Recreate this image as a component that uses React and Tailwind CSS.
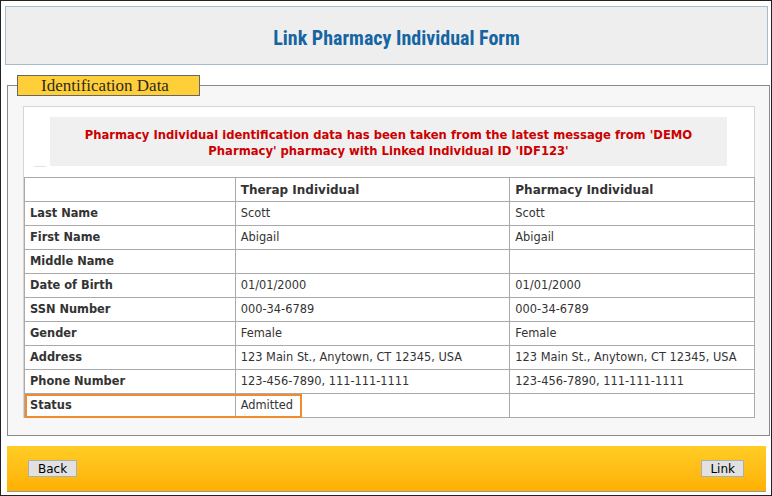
import React from "react";

const rows = [
  ["Last Name", "Scott", "Scott"],
  ["First Name", "Abigail", "Abigail"],
  ["Middle Name", "", ""],
  ["Date of Birth", "01/01/2000", "01/01/2000"],
  ["SSN Number", "000-34-6789", "000-34-6789"],
  ["Gender", "Female", "Female"],
  ["Address", "123 Main St., Anytown, CT 12345, USA", "123 Main St., Anytown, CT 12345, USA"],
  ["Phone Number", "123-456-7890, 111-111-1111", "123-456-7890, 111-111-1111"],
];

export default function App() {
  const verdana = { fontFamily: '"DejaVu Sans", Verdana, sans-serif' };
  const cell = "border border-[#aaaaaa] px-[5px]";
  return (
    <div className="w-[772px] h-[496px] border border-[#222] bg-white relative overflow-hidden" style={verdana}>
      <div className="ml-[4px] mt-[5px] w-[763px] h-[59px] bg-[#eeeeee] border border-[#a6bccd] flex items-center justify-center pl-[20px]">
        <span
          className="text-[#1565a3] text-[20px] font-bold pt-[4px]"
          style={{ fontFamily: '"Liberation Sans Narrow", "Roboto Condensed", Roboto, sans-serif', fontStretch: "condensed" }}
        >
          Link Pharmacy Individual Form
        </span>
      </div>

      <div className="relative ml-[6px] mt-[20px] w-[763px] h-[351px] border border-[#8a8a8a] bg-[#f7f7f7]">
        <div
          className="absolute left-[9px] top-[-11px] w-[183px] h-[21px] bg-[#ffcf3a] border border-[#666] pl-[23px] text-[17px] leading-[19px] text-[#2f2a1c]"
          style={{ fontFamily: '"Liberation Serif", "Times New Roman", serif' }}
        >
          Identification Data
        </div>
        <div className="relative ml-[15px] mt-[20px] w-[732px] border border-[#d6d6d6] border-b-0 bg-white">
          <div className="ml-[26px] mt-[10px] w-[677px] h-[49px] pt-[2px] bg-[#f0f0f0] flex flex-col items-center justify-center text-[#cc0000] font-bold text-[11.6px] leading-[16px]">
            <div>Pharmacy Individual identification data has been taken from the latest message from 'DEMO</div>
            <div>Pharmacy' pharmacy with Linked Individual ID 'IDF123'</div>
          </div>
          <div className="ml-[10px] w-[12px] h-[1px] bg-[#e4e4e4]" />
          <table className="mt-[10px] w-[731px] border-collapse text-[11.4px] text-[#333]">
            <colgroup>
              <col className="w-[211px]" />
              <col className="w-[275px]" />
              <col className="w-[245px]" />
            </colgroup>
            <tbody>
              <tr className="h-[24px]">
                <td className={cell}></td>
                <td className={cell + " font-bold text-[12px]"}>Therap Individual</td>
                <td className={cell + " font-bold text-[12px]"}>Pharmacy Individual</td>
              </tr>
              {rows.map((r) => (
                <tr key={r[0]} className="h-[24px]">
                  <td className={cell + " font-bold"}>{r[0]}</td>
                  <td className={cell}>{r[1]}</td>
                  <td className={cell}>{r[2]}</td>
                </tr>
              ))}
              <tr className="h-[24px]">
                <td className={cell + " font-bold"}>Status</td>
                <td className={cell}>Admitted</td>
                <td className={cell}></td>
              </tr>
            </tbody>
          </table>
          <div className="absolute left-[1px] bottom-[0px] w-[277px] h-[24px] border-2 border-[#f28a2e] pointer-events-none" />
        </div>
      </div>

      <div className="ml-[6px] mt-[10px] w-[759px] h-[46px] bg-gradient-to-b from-[#ffcd25] to-[#ffb000] border-b border-[#999] flex items-center justify-between px-[21px]">
        <button className="h-[17px] px-[9px] bg-[#e1e1e1] border border-[#adadad] text-[12px] leading-[14px] text-black" style={verdana}>Back</button>
        <button className="h-[17px] px-[8px] mr-[1px] bg-[#e1e1e1] border border-[#adadad] text-[12px] leading-[14px] text-black" style={verdana}>Link</button>
      </div>
    </div>
  );
}
